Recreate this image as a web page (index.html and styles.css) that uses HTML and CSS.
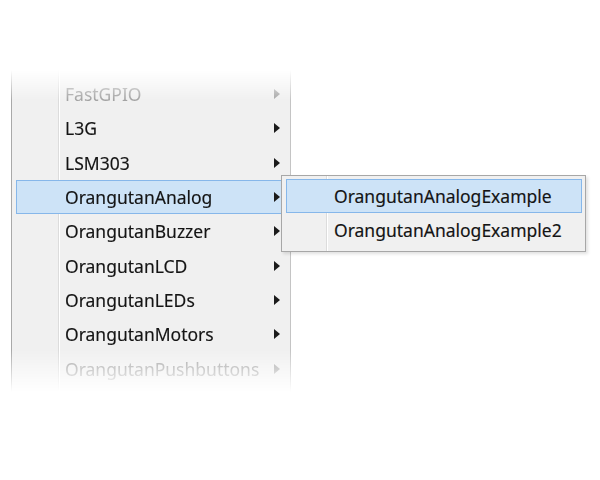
FILE: index.html
```html
<!DOCTYPE html>
<html>
<head>
<meta charset="utf-8">
<link rel="stylesheet" href="styles.css">
</head>
<body>
<div class="stage">
  <div class="menu">
    <div class="sep"></div>
    <div class="item disabled"><span class="label">FastGPIO</span><span class="arrow"></span></div>
    <div class="item"><span class="label">L3G</span><span class="arrow"></span></div>
    <div class="item"><span class="label">LSM303</span><span class="arrow"></span></div>
    <div class="item active"><span class="label">OrangutanAnalog</span><span class="arrow"></span></div>
    <div class="item"><span class="label">OrangutanBuzzer</span><span class="arrow"></span></div>
    <div class="item"><span class="label">OrangutanLCD</span><span class="arrow"></span></div>
    <div class="item"><span class="label">OrangutanLEDs</span><span class="arrow"></span></div>
    <div class="item"><span class="label">OrangutanMotors</span><span class="arrow"></span></div>
    <div class="item disabled"><span class="label">OrangutanPushbuttons</span><span class="arrow"></span></div>
  </div>
  <div class="submenu">
    <div class="sep"></div>
    <div class="item active"><span class="label">OrangutanAnalogExample</span></div>
    <div class="item"><span class="label">OrangutanAnalogExample2</span></div>
  </div>
</div>
</body>
</html>
```
FILE: styles.css
```css
html, body {
  margin: 0;
  padding: 0;
  background: #ffffff;
}
body {
  font-family: "Noto Sans", "Open Sans", sans-serif;
  color: #141414;
}
.stage {
  position: relative;
  width: 600px;
  height: 480px;
  padding-top: 70px;
  padding-left: 11px;
  box-sizing: border-box;
}
.menu {
  position: relative;
  width: 280px;
  box-sizing: border-box;
  background: #f0f0f0;
  border-left: 1px solid #a9a9a9;
  border-right: 1px solid #c4c4c4;
  padding: 7px 4px 6px 4px;
  -webkit-mask-image: linear-gradient(to bottom, transparent 0px, #000 30px, #000 calc(100% - 42px), transparent 100%);
  mask-image: linear-gradient(to bottom, transparent 0px, #000 30px, #000 calc(100% - 42px), transparent 100%);
}
.menu .sep, .submenu .sep {
  position: absolute;
  top: 0;
  bottom: 0;
  width: 1px;
  background: #dcdcdc;
  border-right: 1px solid #ffffff;
}
.menu .sep { left: 46px; }
.submenu .sep { left: 44px; }
.item {
  position: relative;
  display: flex;
  align-items: center;
  height: 34.33px;
  box-sizing: border-box;
  border: 1px solid transparent;
  font-size: 17.5px;
  -webkit-text-stroke: 0.15px #141414;
}
.menu .item { padding-left: 48px; }
.item.active {
  background: #cde3f7;
  border-color: #86b7ea;
}
.item.disabled { color: #a3a3a3; -webkit-text-stroke: 0; }
.label { flex: 1; white-space: nowrap; }
.arrow {
  width: 0;
  height: 0;
  border-top: 5px solid transparent;
  border-bottom: 5px solid transparent;
  border-left: 6px solid #1b1b1b;
  margin-right: 5px;
}
.item.disabled .arrow { border-left-color: #a8a8a8; }
.submenu {
  position: absolute;
  left: 281px;
  top: 175px;
  width: 305px;
  box-sizing: border-box;
  background: #f0f0f0;
  border: 1px solid #a7a7a7;
  padding: 3px 3px 4px 4px;
  box-shadow: 2px 2px 3px rgba(0,0,0,0.12);
}
.submenu .item {
  padding-left: 47px;
  height: 34px;
}
```
